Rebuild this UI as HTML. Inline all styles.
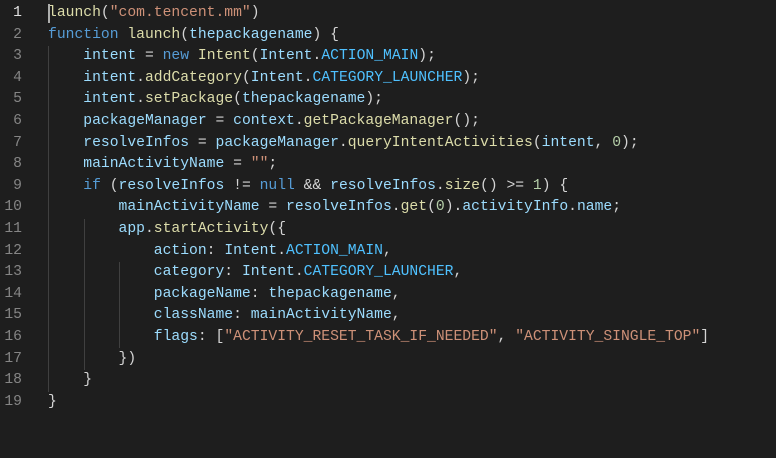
<!DOCTYPE html>
<html><head><style>
html,body{margin:0;padding:0;background:#1e1e1e;width:776px;height:455px;overflow:hidden}
.ed{position:absolute;left:0;top:3px;font-family:"Liberation Mono",monospace;font-size:14.7px;line-height:21.6px;white-space:pre;color:#d4d4d4}
.ln{position:absolute;left:0;width:22px;text-align:right;color:#858585}
.ln.a{color:#e0e0e0}
.c{position:absolute;left:48px}
.k{color:#569cd6}.f{color:#dcdcaa}.v{color:#9cdcfe}.s{color:#ce9178}.t{color:#4ec9b0}.o{color:#4fc1ff}.n{color:#b5cea8}
.g{position:absolute;width:1px;background:#404040}
.cur{position:absolute;left:48px;top:4px;width:1.5px;height:19px;background:#aeafad}
</style></head><body>
<div class="g" style="left:48px;top:46px;height:346px"></div>
<div class="g" style="left:84px;top:219px;height:151px"></div>
<div class="g" style="left:119px;top:262px;height:86px"></div>
<div class="ed" style="width:776px;height:455px">
<div class="ln a" style="top:0">1</div><div class="c" style="top:0"><span class="f">launch</span>(<span class="s">"com.tencent.mm"</span>)</div>
<div class="ln" style="top:21.6px">2</div><div class="c" style="top:21.6px"><span class="k">function</span> <span class="f">launch</span>(<span class="v">thepackagename</span>) {</div>
<div class="ln" style="top:43.2px">3</div><div class="c" style="top:43.2px">    <span class="v">intent</span> = <span class="k">new</span> <span class="f">Intent</span>(<span class="v">Intent</span>.<span class="o">ACTION_MAIN</span>);</div>
<div class="ln" style="top:64.8px">4</div><div class="c" style="top:64.8px">    <span class="v">intent</span>.<span class="f">addCategory</span>(<span class="v">Intent</span>.<span class="o">CATEGORY_LAUNCHER</span>);</div>
<div class="ln" style="top:86.4px">5</div><div class="c" style="top:86.4px">    <span class="v">intent</span>.<span class="f">setPackage</span>(<span class="v">thepackagename</span>);</div>
<div class="ln" style="top:108px">6</div><div class="c" style="top:108px">    <span class="v">packageManager</span> = <span class="v">context</span>.<span class="f">getPackageManager</span>();</div>
<div class="ln" style="top:129.6px">7</div><div class="c" style="top:129.6px">    <span class="v">resolveInfos</span> = <span class="v">packageManager</span>.<span class="f">queryIntentActivities</span>(<span class="v">intent</span>, <span class="n">0</span>);</div>
<div class="ln" style="top:151.2px">8</div><div class="c" style="top:151.2px">    <span class="v">mainActivityName</span> = <span class="s">""</span>;</div>
<div class="ln" style="top:172.8px">9</div><div class="c" style="top:172.8px">    <span class="k">if</span> (<span class="v">resolveInfos</span> != <span class="k">null</span> &amp;&amp; <span class="v">resolveInfos</span>.<span class="f">size</span>() &gt;= <span class="n">1</span>) {</div>
<div class="ln" style="top:194.4px">10</div><div class="c" style="top:194.4px">        <span class="v">mainActivityName</span> = <span class="v">resolveInfos</span>.<span class="f">get</span>(<span class="n">0</span>).<span class="v">activityInfo</span>.<span class="v">name</span>;</div>
<div class="ln" style="top:216px">11</div><div class="c" style="top:216px">        <span class="v">app</span>.<span class="f">startActivity</span>({</div>
<div class="ln" style="top:237.6px">12</div><div class="c" style="top:237.6px">            <span class="v">action</span>: <span class="v">Intent</span>.<span class="o">ACTION_MAIN</span>,</div>
<div class="ln" style="top:259.2px">13</div><div class="c" style="top:259.2px">            <span class="v">category</span>: <span class="v">Intent</span>.<span class="o">CATEGORY_LAUNCHER</span>,</div>
<div class="ln" style="top:280.8px">14</div><div class="c" style="top:280.8px">            <span class="v">packageName</span>: <span class="v">thepackagename</span>,</div>
<div class="ln" style="top:302.4px">15</div><div class="c" style="top:302.4px">            <span class="v">className</span>: <span class="v">mainActivityName</span>,</div>
<div class="ln" style="top:324px">16</div><div class="c" style="top:324px">            <span class="v">flags</span>: [<span class="s">"ACTIVITY_RESET_TASK_IF_NEEDED"</span>, <span class="s">"ACTIVITY_SINGLE_TOP"</span>]</div>
<div class="ln" style="top:345.6px">17</div><div class="c" style="top:345.6px">        })</div>
<div class="ln" style="top:367.2px">18</div><div class="c" style="top:367.2px">    }</div>
<div class="ln" style="top:388.8px">19</div><div class="c" style="top:388.8px">}</div>
</div>
<div class="cur"></div>
</body></html>
